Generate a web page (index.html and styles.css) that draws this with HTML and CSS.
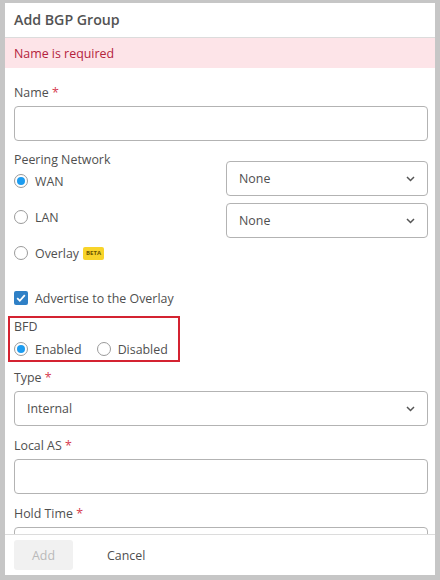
FILE: index.html
```html
<!DOCTYPE html>
<html lang="en">
<head>
    <meta charset="UTF-8">
    <title>Add BGP Group</title>
    <link rel="stylesheet" href="styles.css">
</head>
<body>
    <div class="dialog">
        <div class="dialog-header">Add BGP Group</div>
        <div class="alert">Name is required</div>

        <div class="dialog-body">
            <div class="field first">
                <label class="field-label">Name <span class="req">*</span></label>
                <div class="input"></div>
            </div>

            <div class="peering">
                <div class="peering-left">
                    <label class="field-label">Peering Network</label>
                    <div class="radio-row"><span class="radio checked"></span>WAN</div>
                    <div class="radio-row"><span class="radio"></span>LAN</div>
                    <div class="radio-row overlay"><span class="radio"></span>Overlay <span class="beta">BETA</span></div>
                </div>
                <div class="peering-right">
                    <div class="select">None
                        <svg class="chev" width="9" height="6" viewBox="0 0 9 6"><path d="M1 1l3.5 3.5L8 1" fill="none" stroke="#555" stroke-width="1.5"/></svg>
                    </div>
                    <div class="select">None
                        <svg class="chev" width="9" height="6" viewBox="0 0 9 6"><path d="M1 1l3.5 3.5L8 1" fill="none" stroke="#555" stroke-width="1.5"/></svg>
                    </div>
                </div>
            </div>

            <div class="check-row">
                <span class="checkbox">
                    <svg width="14" height="14" viewBox="0 0 14 14"><path d="M3.2 7.2l2.6 2.6 5-5.6" fill="none" stroke="#fff" stroke-width="1.8"/></svg>
                </span>
                Advertise to the Overlay
            </div>

            <div class="bfd-box">
                <label class="field-label">BFD</label>
                <div class="bfd-options">
                    <div class="radio-row"><span class="radio checked"></span>Enabled</div>
                    <div class="radio-row"><span class="radio"></span>Disabled</div>
                </div>
            </div>

            <div class="field type">
                <label class="field-label">Type <span class="req">*</span></label>
                <div class="select">Internal
                    <svg class="chev" width="9" height="6" viewBox="0 0 9 6"><path d="M1 1l3.5 3.5L8 1" fill="none" stroke="#555" stroke-width="1.5"/></svg>
                </div>
            </div>

            <div class="field">
                <label class="field-label">Local AS <span class="req">*</span></label>
                <div class="input"></div>
            </div>

            <div class="field">
                <label class="field-label">Hold Time <span class="req">*</span></label>
                <div class="input"></div>
            </div>
        </div>

        <div class="dialog-footer">
            <button class="btn btn-add" disabled>Add</button>
            <button class="btn btn-cancel">Cancel</button>
        </div>
    </div>
</body>
</html>
```

FILE: styles.css
```css
html, body {
    margin: 0;
    height: 100%;
}
body {
    background-color: #c6c6c6;
    font-family: "Open Sans", "Noto Sans", Arial, sans-serif;
    font-size: 12.4px;
    color: #4f4f4f;
    padding: 3px 5px 5px 5px;
    box-sizing: border-box;
}
.dialog {
    width: 430px;
    height: 572px;
    background-color: #fff;
    display: flex;
    flex-direction: column;
}
.dialog-header {
    height: 34px;
    line-height: 34px;
    padding-left: 9px;
    font-size: 14.2px;
    font-weight: 600;
    color: #535353;
    border-bottom: 1px solid #dcdcdc;
}
.alert {
    height: 30px;
    line-height: 31px;
    padding-left: 9px;
    background-color: #fde4e8;
    color: #b4233c;
}
.dialog-body {
    flex: 1;
    overflow: hidden;
    padding: 0 7px 0 9px;
}
.field-label {
    display: block;
    line-height: 18px;
}
.req {
    color: #d63c4f;
}
.field {
    margin-top: 11px;
}
.field.first {
    margin-top: 16px;
}
.field.type {
    margin-top: 7px;
}
.input, .select {
    height: 35px;
    box-sizing: border-box;
    border: 1px solid #b3b3b3;
    border-radius: 4px;
    margin-top: 4px;
}
.select {
    display: flex;
    align-items: center;
    justify-content: space-between;
    padding: 0 12px 0 12px;
}
.chev {
    display: block;
}

/* peering network */
.peering {
    display: flex;
    margin-top: 10px;
}
.peering-left {
    flex: 1;
}
.peering-right {
    width: 202px;
    padding-top: 10px;
    display: flex;
    flex-direction: column;
    gap: 7px;
}
.peering-right .select {
    margin-top: 0;
}
.radio-row {
    display: flex;
    align-items: center;
    height: 18px;
    margin-top: 18px;
}
.peering-left .field-label + .radio-row {
    margin-top: 3px;
}
.radio {
    width: 14px;
    height: 14px;
    box-sizing: border-box;
    border: 1px solid #9a9a9a;
    border-radius: 50%;
    margin-right: 7px;
    position: relative;
    flex-shrink: 0;
}
.radio.checked::after {
    content: "";
    position: absolute;
    left: 2px;
    top: 2px;
    width: 8px;
    height: 8px;
    border-radius: 50%;
    background-color: #1c9cf0;
}
.beta {
    background-color: #f8d42a;
    color: #6a5400;
    font-size: 6px;
    font-weight: 700;
    line-height: 11px;
    padding: 1px 3px;
    border-radius: 2px;
    margin-left: 4px;
}

/* checkbox */
.check-row {
    display: flex;
    align-items: center;
    height: 18px;
    margin-top: 27px;
}
.checkbox {
    width: 14px;
    height: 14px;
    background-color: #2f80c6;
    border-radius: 2px;
    margin-right: 7px;
    display: flex;
}

/* bfd highlight */
.bfd-box {
    display: inline-block;
    margin-top: 9px;
    margin-left: -6px;
    border: 2px solid #d42331;
    padding: 0 10px 2px 4px;
}
.bfd-options {
    display: flex;
    margin-top: 4px;
}
.bfd-options .radio-row {
    margin-top: 0;
    margin-right: 15px;
}
.bfd-options .radio-row:last-child {
    margin-right: 0;
}

/* footer */
.dialog-footer {
    height: 41px;
    box-sizing: border-box;
    border-top: 1px solid #dcdcdc;
    display: flex;
    align-items: center;
    padding-left: 9px;
}
.btn {
    font-family: inherit;
    font-size: 12.4px;
    border: none;
    border-radius: 3px;
    height: 30px;
    cursor: pointer;
}
.btn-add {
    width: 59px;
    background-color: #f1f1f1;
    color: #b9b9b9;
}
.btn-cancel {
    background: none;
    color: #4f4f4f;
    margin-left: 15px;
    padding: 0 19px;
}
```
